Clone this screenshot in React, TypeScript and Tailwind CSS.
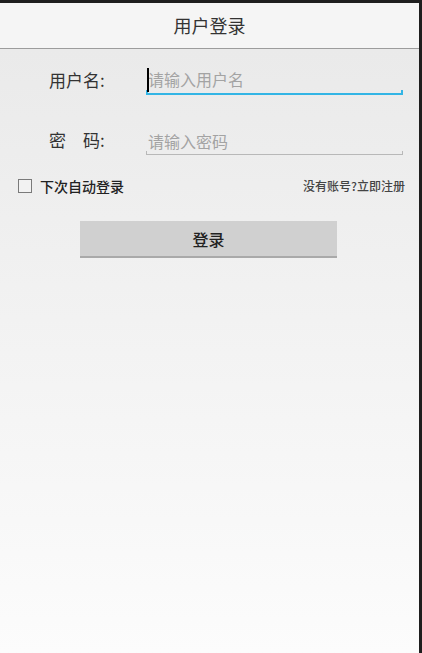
import React from "react";

export default function App() {
  return (
    <div className="w-[422px] h-[653px] bg-[#1e1e1e] pt-[3px] pr-[3px] flex flex-col font-['Noto_Sans_CJK_SC','Noto_Sans',sans-serif]">
      <div className="flex-1 flex flex-col">
        <div className="h-[46px] bg-[#f5f5f5] border-b border-[#9c9c9c] flex items-center justify-center text-[18px] text-[#333]">
          用户登录
        </div>
        <div className="flex-1 flex flex-col bg-gradient-to-b from-[#eaeaea] to-[#fcfcfc]">
          {/* username row */}
          <div className="mt-[16px] flex items-stretch h-[30px]">
            <div className="w-[146px] pl-[49px] flex items-center text-[17px] text-[#333]">用户名:</div>
            <div className="w-[257px] flex flex-col">
              <div className="relative h-[25px] flex items-center pl-[2px] pt-[2px] text-[16px] text-[#a3a3a3]">
                <span className="absolute left-[1px] top-[3px] w-[2px] h-[24px] bg-black"></span>
                请输入用户名
              </div>
              <div className="h-[5px] border-x-2 border-b-2 border-[#33b5e5]"></div>
            </div>
          </div>

          {/* password row */}
          <div className="mt-[30px] flex items-stretch h-[30px]">
            <div className="w-[146px] pl-[49px] flex items-center text-[17px] text-[#333]">密　码:</div>
            <div className="w-[257px] flex flex-col">
              <div className="h-[26px] flex items-center pl-[2px] pt-[5px] text-[16px] text-[#a3a3a3]">请输入密码</div>
              <div className="h-[4px] border-x border-b border-[#b8b8b8]"></div>
            </div>
          </div>

          {/* checkbox row */}
          <div className="mt-[21px] h-[20px] flex items-center justify-between pl-[18px] pr-[14px]">
            <div className="flex items-center gap-[8px]">
              <div className="w-[14px] h-[14px] border border-[#7a7a7a] bg-[#f2f2f2]"></div>
              <span className="text-[14px] font-medium text-[#222]">下次自动登录</span>
            </div>
            <span className="text-[12px] font-medium text-[#444]">没有账号?立即注册</span>
          </div>

          {/* button */}
          <div className="mt-[25px] pl-[80px]">
            <div className="w-[257px] h-[37px] bg-[#d0d0d0] border-b-2 border-[#a9a9a9] flex items-center justify-center text-[16px] font-medium text-[#222]">
              登录
            </div>
          </div>
        </div>
      </div>
    </div>
  );
}
